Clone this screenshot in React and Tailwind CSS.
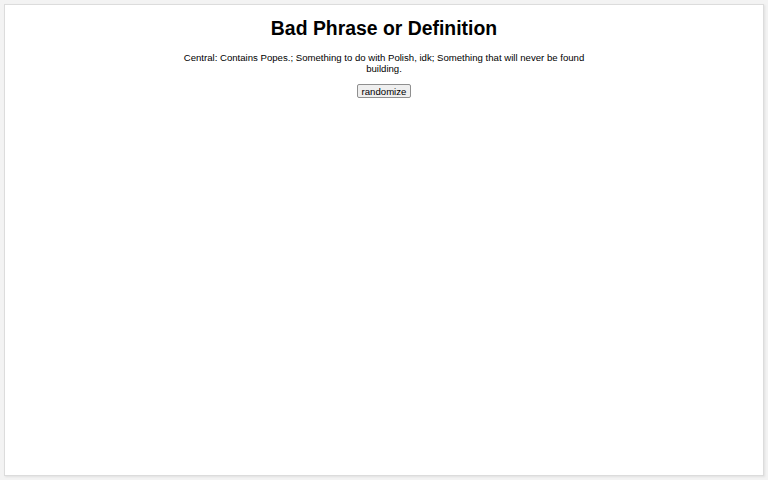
import React, { useState } from 'react';

const definitions = [
  'Central: Contains Popes.; Something to do with Polish, idk; Something that will never be found building.',
];

const App = () => {
  const [text, setText] = useState(definitions[0]);

  return (
    <div className="h-[480px] bg-[#f3f3f3] p-1" style={{ fontFamily: '"Liberation Sans", Arial, sans-serif' }}>
      <div className="h-full border border-[#dcdcdc] bg-white flex flex-col items-center shadow-[1px_1px_2px_rgba(0,0,0,0.08)]">
        <h1 className="mt-[12px] text-[19.4px] leading-[23px] font-bold text-black">Bad Phrase or Definition</h1>
        <p className="mt-[12px] w-[404px] text-center text-[9.6px] leading-[11px] text-black">{text}</p>
        <button
          onClick={() => setText(definitions[Math.floor(Math.random() * definitions.length)])}
          className="mt-[10px] h-[14px] px-[4px] text-[9.6px] leading-[11px] text-black bg-[#efefef] border border-[#8f8f8f] rounded-[2px]"
        >
          randomize
        </button>
      </div>
    </div>
  );
};

export default App;
